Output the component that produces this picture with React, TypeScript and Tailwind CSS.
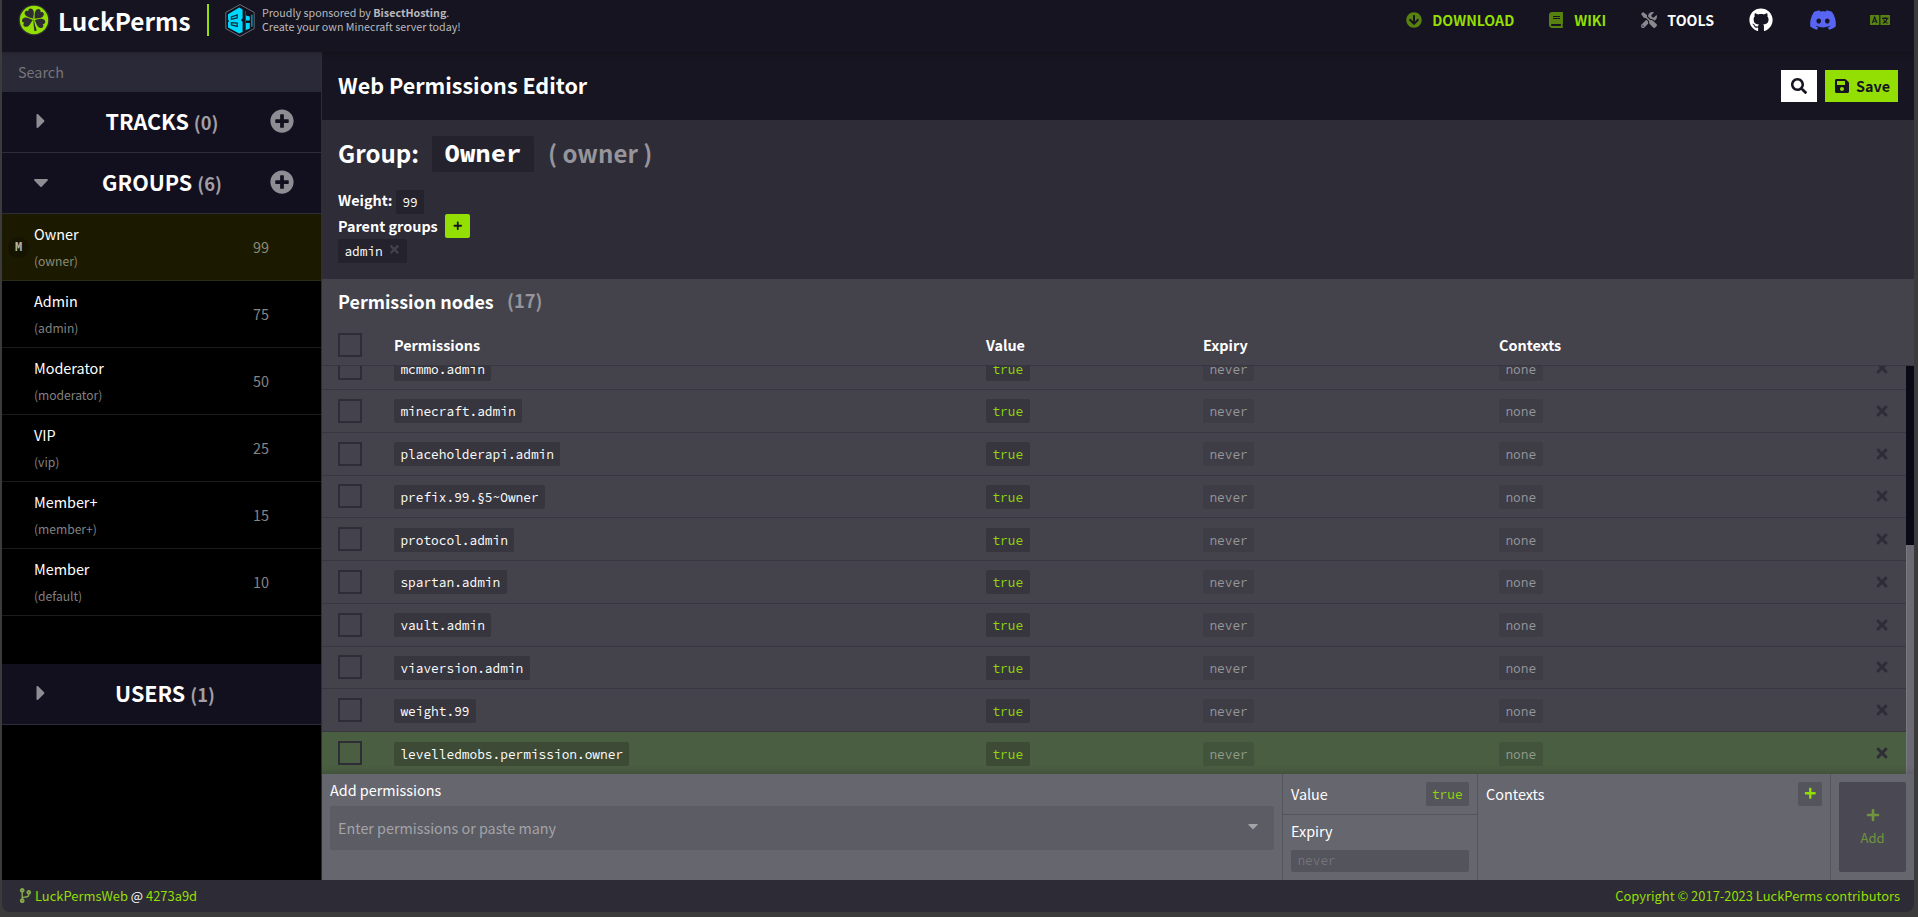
import {
  FaArrowCircleDown,
  FaBook,
  FaCaretDown,
  FaCaretRight,
  FaCodeBranch,
  FaGithub,
  FaPlus,
  FaPlusCircle,
  FaSave,
  FaSearch,
  FaTimes,
  FaTools,
} from "react-icons/fa";
import { FaDiscord } from "react-icons/fa6";
import type { ReactNode } from "react";

const MONO = "font-['Source_Code_Pro','Noto_Sans_Mono','DejaVu_Sans_Mono',monospace]";

const groups = [
  { name: "Owner", id: "owner", weight: 99, active: true },
  { name: "Admin", id: "admin", weight: 75 },
  { name: "Moderator", id: "moderator", weight: 50 },
  { name: "VIP", id: "vip", weight: 25 },
  { name: "Member+", id: "member+", weight: 15 },
  { name: "Member", id: "default", weight: 10 },
];

const nodes = [
  "mcmmo.admin",
  "minecraft.admin",
  "placeholderapi.admin",
  "prefix.99.§5~Owner",
  "protocol.admin",
  "spartan.admin",
  "vault.admin",
  "viaversion.admin",
  "weight.99",
  "levelledmobs.permission.owner",
];

function CloverLogo() {
  const leaf = "M0 0C-1.2 -2.2 -5 -4.6 -4.6 -8C-4.2 -11 -1 -11.4 0 -9C1 -11.4 4.2 -11 4.6 -8C5 -4.6 1.2 -2.2 0 0Z";
  return (
    <svg width="32" height="32" viewBox="0 0 32 32">
      <circle cx="16" cy="16" r="15.6" fill="#2d2d33" />
      <circle cx="16" cy="16" r="14.2" fill="#94df03" />
      <g transform="translate(15.8 15.6)" fill="#2d2d33">
        <path d={leaf} transform="rotate(-108) translate(0 -1)" />
        <path d={leaf} transform="rotate(-33) translate(0 -1)" />
        <path d={leaf} transform="rotate(42) translate(0 -1)" />
        <path d={leaf} transform="rotate(117) translate(0 -1)" />
        <path d="M0 0Q1 6 3 11L.6 11.6Q-.4 6 -.4 0Z" />
      </g>
    </svg>
  );
}

function BisectLogo() {
  return (
    <svg width="30" height="33" viewBox="0 0 30 33">
      <path d="M15 .6L29.2 8.4V24.6L15 32.4L.8 24.6V8.4Z" fill="#12111d" stroke="#7c8492" strokeWidth=".8" />
      <path d="M3 10.2L14.2 3.6L17.6 5.4V14.6L16 16L17.6 17.8V28L14.2 29.6L3 23.6V18.4L4 17L3 15.6Z" fill="#00d9ff" />
      <path d="M20.4 7L20.4 26.6" stroke="#0b5c70" strokeWidth="1" />
      <path d="M21 11.4L24.8 12.6V16.6H21ZM21 19H24.8V24.4L21 26Z" fill="#00d9ff" />
      <path d="M26.4 10.4L27.4 11V22.4L26.4 23Z" fill="#00d9ff" />
      <path d="M6.4 12.8L12.2 11V14L6.4 15.2ZM6.4 18.6L12.2 19.2V22.4L6.4 21Z" fill="#00d9ff" stroke="#0a3340" strokeWidth="1.3" />
    </svg>
  );
}

function LanguageIcon() {
  return (
    <svg width="20" height="10" viewBox="0 0 20 10">
      <path d="M0 .6Q0 0 .6 0H9.2V10H.6Q0 10 0 9.4ZM10.4 0H19.4Q20 0 20 .6V9.4Q20 10 19.4 10H10.4Z" fill="#588210" />
      <g fill="none" stroke="#151420" strokeWidth="1.1">
        <path d="M2.4 8L4.7 2L7 8M3.2 6.2H6.2" />
        <path d="M12 3.4H18.4M15.2 2V3.4M13 8.2Q16.6 6.6 17 3.6M13.4 4.6Q14.6 7.4 17.6 8.2" />
      </g>
    </svg>
  );
}

function Badge({ children, className }: { children: ReactNode; className: string }) {
  return (
    <span className={`inline-flex h-6 items-center rounded-[2px] px-[6.4px] text-[12.8px] leading-6 ${MONO} ${className}`}>
      {children}
    </span>
  );
}

function Checkbox() {
  return <span className="block size-6 shrink-0 border-2 border-[#2d2c37]" />;
}

function SectionHead({ title, count, open, add }: { title: string; count: number; open?: boolean; add?: boolean }) {
  return (
    <div className="flex h-[61px] items-center border-b border-[#2d2c37] bg-[#12101f] px-[27px] pb-[2px] text-[24px] text-[#8e8d93]">
      {open ? <FaCaretDown /> : <FaCaretRight />}
      <h2 className="flex flex-1 items-baseline justify-center gap-[5px] pt-px pl-px text-[21.5px] leading-8 font-bold text-white">
        {title}
        <span className="text-[18.3px] text-[#a09fa5]">({count})</span>
      </h2>
      {add ? <FaPlusCircle /> : <span className="w-[18px]" />}
    </div>
  );
}

function Sidebar() {
  return (
    <aside className="flex w-80 shrink-0 flex-col border-r border-[#2d2c37] bg-black">
      <div className="flex h-10 shrink-0 items-center bg-[#2a2937] pl-4 text-[14.4px] text-[#75757b]">Search</div>
      <SectionHead title="TRACKS" count={0} add />
      <SectionHead title="GROUPS" count={6} open add />
      <ul className="mb-[48px]">
        {groups.map((g) => (
          <li
            key={g.id}
            className={`flex h-[67px] items-center border-b pl-[6px] pr-[52px] ${
              g.active ? "border-[#2b2b17] bg-[#1b1a00]" : "border-[#1c1c1c]"
            }`}
          >
            <span
              className={`mr-[5px] flex size-[21px] items-center justify-center rounded-full text-[12.8px] font-bold ${MONO} ${
                g.active ? "bg-[#151400] text-[#b3b3a8]" : ""
              }`}
            >
              {g.active ? "M" : ""}
            </span>
            <div className="flex-1 text-[14.4px] leading-[27px] text-white">
              <p>{g.name}</p>
              <p className={`pt-px text-[12.1px] leading-[26px] ${g.active ? "text-[#8b8b76]" : "text-[#828282]"}`}>({g.id})</p>
            </div>
            <span className={`text-[14.4px] ${g.active ? "text-[#8b8b77]" : "text-[#858585]"}`}>{g.weight}</span>
          </li>
        ))}
      </ul>
      <SectionHead title="USERS" count={1} />
    </aside>
  );
}

function NodeRow({ name, fresh }: { name: string; fresh: boolean }) {
  const muted = fresh ? "bg-[#43543c] text-[#8f9c8a]" : "bg-[#3e3d46] text-[#96969b]";
  const solid = fresh ? "bg-[#3d4b36]" : "bg-[#37363e]";
  return (
    <li
      className={`grid h-[42.78px] shrink-0 grid-cols-[72px_592px_217px_296px_1fr] items-center border-b ${
        fresh ? "border-[#475940] bg-[#4a5e42]" : "border-[#383640]"
      }`}
    >
      <span className="pl-4">
        <Checkbox />
      </span>
      <span className="flex pt-px">
        <Badge className={`${solid} text-white`}>{name}</Badge>
      </span>
      <span className="flex pt-px">
        <Badge className={`${solid} text-[#8fd80a]`}>true</Badge>
      </span>
      <span className="flex pt-px">
        <Badge className={muted}>never</Badge>
      </span>
      <span className="flex items-center justify-between pt-px pr-4">
        <Badge className={muted}>none</Badge>
        <FaTimes className="mb-px text-[16px] text-[#2d2c37]" />
      </span>
    </li>
  );
}

function AddPanel() {
  return (
    <div className="z-10 flex h-[106px] shrink-0 bg-[#66666f] text-[14.4px] text-white shadow-[0_0_8px_rgba(0,0,0,0.25)]">
      <div className="w-[961px] border-r border-[#55555e] px-2">
        <p className="h-8 leading-[31px]">Add permissions</p>
        <div className="flex h-11 items-center justify-between rounded-[2px] bg-[#5c5c64] pr-[13px] pl-2 text-[14.35px] text-[#a3a3a8]">
          Enter permissions or paste many
          <FaCaretDown className="mb-1 text-[16px]" />
        </div>
      </div>
      <div className="flex w-[195px] flex-col border-r border-[#55555e]">
        <div className="flex h-[41px] items-center justify-between border-b border-[#55555e] px-2">
          <span className="pb-px">Value</span>
          <Badge className="bg-[#54545c] text-[#8fd80a]">true</Badge>
        </div>
        <div className="px-2">
          <p className="h-[35px] leading-[31px]">Expiry</p>
          <div className={`flex h-[22px] items-center rounded-[2px] bg-[#54545c] px-[6.4px] text-[12.8px] text-[#737379] ${MONO}`}>
            never
          </div>
        </div>
      </div>
      <div className="flex w-[353px] items-start justify-between border-r border-[#55555e] p-2">
        <span className="leading-[23px]">Contexts</span>
        <span className="flex size-6 items-center justify-center rounded-[2px] bg-[#54545c] pb-px text-[12.5px] text-[#94df03]">
          <FaPlus />
        </span>
      </div>
      <div className="flex-1 p-2">
        <div className="flex h-[90px] flex-col items-center rounded-[2px] bg-[#4a4953] pt-[26px] text-[13px] leading-[26px] text-[#6f943c]">
          <FaPlus className="mb-[3px] text-[14px]" />
          Add
        </div>
      </div>
    </div>
  );
}

function Header() {
  return (
    <header className="z-20 flex h-[52px] shrink-0 items-start bg-[#151420] shadow-[0_0_6px_rgba(0,0,0,0.3)]">
      <div className="flex h-10 items-center pl-4">
        <CloverLogo />
        <span className="ml-[8px] w-[149px] pt-px text-[24.3px] leading-10 font-bold text-white">LuckPerms</span>
        <span className="h-8 w-[2px] bg-[#94df03]" />
        <span className="ml-4">
          <BisectLogo />
        </span>
        <p className="ml-[7px] text-[10.72px] leading-[14px] text-[#b9b9bd]">
          Proudly sponsored by <b>BisectHosting</b>.
          <br />
          Create your own Minecraft server today!
        </p>
      </div>
      <nav className="ml-auto flex h-10 items-center pr-6 text-[14.15px] font-bold text-[#94df03]">
        <FaArrowCircleDown className="mr-[10px] text-[16px] text-[#588210]" />
        <span className="mr-[34px] pt-px">DOWNLOAD</span>
        <FaBook className="mr-[10px] text-[16px] text-[#588210]" />
        <span className="mr-[35px] pt-px">WIKI</span>
        <FaTools className="mr-[10px] text-[16px] text-[#8a898f]" />
        <span className="mr-[35px] pt-px text-white">TOOLS</span>
        <FaGithub className="mr-[36px] text-[24px] text-white" />
        <FaDiscord className="mr-[33px] text-[28px] text-[#5865f2]" />
        <LanguageIcon />
      </nav>
    </header>
  );
}

function Editor() {
  return (
    <main className="flex min-w-0 flex-1 flex-col">
      <div className="flex h-[68px] shrink-0 items-center bg-[#161521] pr-4 pl-4">
        <h1 className="flex-1 pb-[3px] text-[21.5px] leading-8 font-bold text-white">Web Permissions Editor</h1>
        <button className="mr-2 flex h-8 w-9 items-center justify-center bg-white text-[16px] text-[#151420]">
          <FaSearch />
        </button>
        <button className="flex h-8 w-[73px] items-center justify-center gap-[6px] bg-[#94df03] pl-px text-[14.4px] font-bold text-[#151420]">
          <FaSave className="text-[16px]" />
          Save
        </button>
      </div>

      <section className="h-[159px] shrink-0 bg-[#2d2c37] px-4 pt-4 text-[14.4px] font-bold text-white">
        <div className="flex h-9 items-center text-[24px] leading-9">
          <span className="w-[94px] pb-[3px]">Group:</span>
          <span className={`flex h-9 w-[102px] items-center justify-center rounded-[2px] bg-[#24232d] pb-[2px] text-[25.6px] ${MONO}`}>
            Owner
          </span>
          <span className="ml-[14px] pb-[3px] text-[#96959b]">( owner )</span>
        </div>
        <div className="mt-[17px] flex h-[25px] items-center">
          <span className="w-[58px] pb-[3px]">Weight:</span>
          <Badge className="bg-[#24232d] font-normal">99</Badge>
        </div>
        <div className="flex h-6 items-center">
          <span className="w-[107px]">Parent groups</span>
          <span className="flex h-6 w-[25px] items-center justify-center rounded-[2px] bg-[#94df03] text-[9.5px] text-[#151420]">
            <FaPlus />
          </span>
        </div>
        <div className="mt-px flex">
          <Badge className="bg-[#24232d] font-normal">
            admin
            <FaTimes className="-mr-px mb-[3px] ml-[5.6px] text-[12.8px] text-[#43424c]" />
          </Badge>
        </div>
      </section>

      <section className="flex min-h-0 flex-1 flex-col bg-[#44434c] text-white">
        <div className="flex h-[46px] shrink-0 items-center pb-[2px] pl-4 text-[17.9px] font-bold">
          <h3 className="w-[169px]">Permission nodes</h3>
          <span className="text-[18.3px] text-[#96959b]">(17)</span>
        </div>
        <div className="grid h-[41px] shrink-0 grid-cols-[72px_592px_217px_296px_1fr] items-center border-b border-[#383640] text-[14.4px] font-bold">
          <span className="pl-4">
            <Checkbox />
          </span>
          <span>Permissions</span>
          <span>Value</span>
          <span>Expiry</span>
          <span>Contexts</span>
        </div>
        <div className="flex min-h-0 flex-1">
          <ul className="-mb-[0.9px] flex min-h-0 flex-1 flex-col justify-end overflow-hidden">
            {nodes.map((n, i) => (
              <NodeRow key={n} name={n} fresh={i === nodes.length - 1} />
            ))}
          </ul>
          <div className="flex w-2 flex-col justify-end bg-[#0a0916]">
            <div className="h-[229px] border-l border-[#787880] bg-[#6b6a73]" />
          </div>
        </div>
        <AddPanel />
      </section>
    </main>
  );
}

export default function App() {
  return (
    <div className="h-[917px] w-[1918px] overflow-hidden bg-[#3b3b3b] pr-1 pb-[5px] pl-[2px] font-['Noto_Sans_CJK_SC','Noto_Sans',sans-serif]">
      <div className="flex h-full flex-col overflow-hidden rounded-b-[8px]">
        <Header />
        <div className="flex min-h-0 flex-1">
          <Sidebar />
          <Editor />
        </div>
        <footer className="z-20 flex h-8 shrink-0 items-center justify-between bg-[#2d2c36] pr-[14px] pl-4 text-[12.93px] text-[#94df03]">
          <span className="flex items-center">
            <FaCodeBranch className="mr-[2px] mb-[2px] text-[15px] text-[#86a84c]" />
            <span>
              LuckPermsWeb <span className="text-white">@</span> 4273a9d
            </span>
          </span>
          <span>Copyright © 2017-2023 LuckPerms contributors</span>
        </footer>
      </div>
    </div>
  );
}
